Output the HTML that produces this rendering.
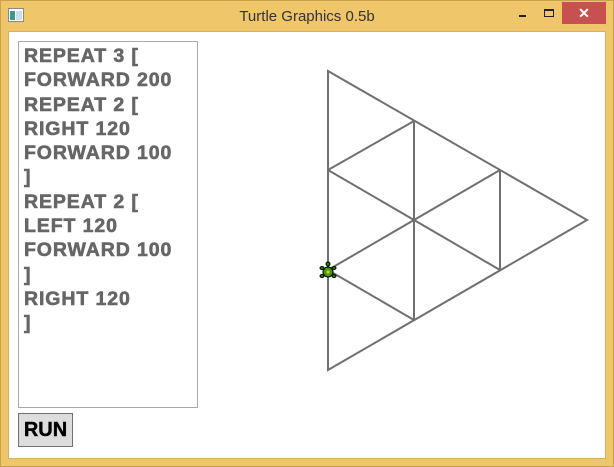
<!DOCTYPE html>
<html><head><style>
html,body{margin:0;padding:0;}
body{width:614px;height:467px;background:#efc66a;position:relative;overflow:hidden;font-family:"Liberation Sans",sans-serif;}
.frame{position:absolute;left:0;top:0;width:612px;height:465px;border:1px solid #c9a24e;}
.title{position:absolute;left:0;top:8px;width:614px;text-align:center;font-size:15px;color:#333;}
.client{position:absolute;left:8px;top:31px;width:598px;height:428px;background:#fff;border:1px solid #d9b25a;box-sizing:border-box;}
.ta{position:absolute;left:18px;top:41px;width:180px;height:367px;border:1px solid #aaa;box-sizing:border-box;background:#fff;}
.code{position:absolute;left:24px;top:44px;font-weight:bold;font-size:19.5px;line-height:24.3px;color:#666;white-space:pre;letter-spacing:0.9px;-webkit-text-stroke:0.6px #666;}
.btn{position:absolute;left:18px;top:413px;width:55px;height:34px;box-sizing:border-box;border:1px solid #707070;background:#ddd;font-weight:bold;font-size:20px;text-align:center;line-height:32px;color:#000;-webkit-text-stroke:0.4px #000;}
.close{position:absolute;left:562px;top:2px;width:44px;height:22px;background:#c75050;color:#fff;text-align:center;font-size:14px;line-height:22px;font-weight:bold;}
</style></head><body>
<div class="frame"></div>
<svg style="position:absolute;left:8px;top:8px" width="16" height="14"><rect x="0.5" y="0.5" width="15" height="13" fill="#fff" stroke="#888"/><rect x="2" y="3" width="5" height="9" fill="#3a9a8a"/><rect x="8" y="3" width="6" height="9" fill="#cde"/></svg>
<div class="title">Turtle Graphics 0.5b</div>
<div style="position:absolute;left:519px;top:15px;width:7px;height:2px;background:#222"></div>
<div style="position:absolute;left:544px;top:9px;width:10px;height:8px;border:1px solid #222;border-top-width:2px;box-sizing:border-box;"></div>
<div class="close">✕</div>
<div class="client"></div>
<div class="ta"></div>
<div class="code">REPEAT 3 [
FORWARD 200
REPEAT 2 [
RIGHT 120
FORWARD 100
]
REPEAT 2 [
LEFT 120
FORWARD 100
]
RIGHT 120
]</div>
<div class="btn">RUN</div>
<svg style="position:absolute;left:0;top:0" width="614" height="467">
<g stroke="#707070" stroke-width="2" fill="none">
<polygon points="328,71 587,220 328,370"/>
<line x1="328" y1="170" x2="500" y2="270"/>
<line x1="328" y1="270" x2="414" y2="320"/>
<line x1="328" y1="170" x2="414" y2="121"/>
<line x1="328" y1="270" x2="500" y2="170"/>
<line x1="414" y1="121" x2="414" y2="320"/>
<line x1="500" y1="170" x2="500" y2="270"/>
</g>
<g stroke="#000" stroke-width="1">
<circle cx="328" cy="264" r="2" fill="#2a7a0a"/>
<ellipse cx="322" cy="268" rx="2" ry="1.5" fill="#2a7a0a"/>
<ellipse cx="334" cy="268" rx="2" ry="1.5" fill="#2a7a0a"/>
<ellipse cx="322" cy="276" rx="2" ry="1.5" fill="#2a7a0a"/>
<ellipse cx="334" cy="276" rx="2" ry="1.5" fill="#2a7a0a"/>
<circle cx="328" cy="272" r="5" fill="#4a9a10"/>
</g>
<circle cx="328" cy="272" r="1.5" fill="#c8e020"/>
</svg>
</body></html>
